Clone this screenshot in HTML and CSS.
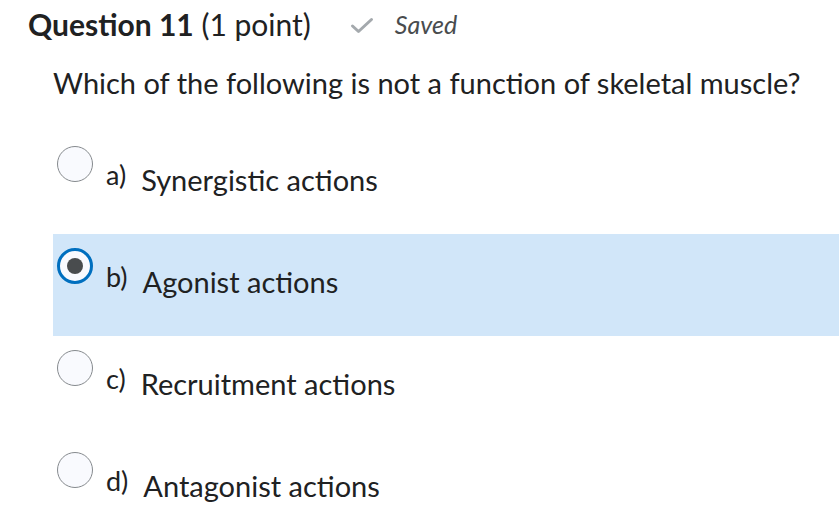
FILE: index.html
```html
<!DOCTYPE html>
<html lang="en">
<head>
<meta charset="utf-8">
<link rel="stylesheet" href="styles.css">
<title>Question 11</title>
</head>
<body>
<div class="page">
  <div class="header">
    <h2 class="title"><strong>Question 11</strong> <span class="points">(1 point)</span></h2>
    <span class="saved">
      <svg class="check" width="24" height="17" viewBox="0 0 24 17" aria-hidden="true">
        <path d="M2.5 9 L8.5 14.5 L21.5 2.5" fill="none" stroke="#a4a9ad" stroke-width="3" stroke-linecap="round" stroke-linejoin="round"/>
      </svg>
      <em>Saved</em>
    </span>
  </div>
  <p class="question">Which of the following is not a function of skeletal muscle?</p>
  <ul class="options">
    <li class="option">
      <span class="radio"></span>
      <span class="letter">a)</span>
      <span class="text">Synergistic actions</span>
    </li>
    <li class="option selected">
      <span class="radio checked"></span>
      <span class="letter">b)</span>
      <span class="text">Agonist actions</span>
    </li>
    <li class="option">
      <span class="radio"></span>
      <span class="letter">c)</span>
      <span class="text">Recruitment actions</span>
    </li>
    <li class="option">
      <span class="radio"></span>
      <span class="letter">d)</span>
      <span class="text">Antagonist actions</span>
    </li>
  </ul>
</div>
</body>
</html>
```
FILE: styles.css
```css
* { box-sizing: border-box; }
html, body {
  margin: 0;
  padding: 0;
  background: #ffffff;
}
body {
  font-family: Lato, "Noto Sans", sans-serif;
  color: #202122;
}
.page {
  width: 839px;
  height: 532px;
  overflow: hidden;
}
.header {
  display: flex;
  align-items: center;
  padding: 6px 0 0 28px;
  height: 42px;
}
.title {
  margin: 0;
  font-size: 30px;
  line-height: 36px;
  font-weight: 400;
  color: #202122;
}
.title strong {
  font-weight: 700;
}
.saved {
  display: flex;
  align-items: center;
  margin-left: 39px;
  gap: 21px;
  color: #494c4e;
  font-size: 25px;
}
.check {
  margin-top: 2px;
}
.saved em {
  font-style: italic;
}
.question {
  margin: 23px 0 0 53px;
  font-size: 29px;
  line-height: 36px;
}
.options {
  list-style: none;
  margin: 31px 0 0 53px;
  padding: 0;
}
.option {
  display: flex;
  align-items: flex-start;
  height: 102px;
  padding: 14px 0 0 4px;
}
.option.selected {
  background: #d1e6f9;
}
.radio {
  flex: none;
  width: 36px;
  height: 36px;
  border-radius: 50%;
  border: 1px solid #868a8e;
  background: #f9fafe;
  position: relative;
}
.radio.checked {
  border: 3px solid #006fbf;
}
.radio.checked::after {
  content: "";
  position: absolute;
  left: 50%;
  top: 50%;
  width: 16px;
  height: 16px;
  margin: -8px 0 0 -8px;
  border-radius: 50%;
  background: #494c4e;
}
.letter {
  margin: 15px 15px 0 13px;
  font-size: 27px;
  line-height: 28px;
}
.text {
  margin-top: 18px;
  font-size: 29px;
  line-height: 32px;
}
```
